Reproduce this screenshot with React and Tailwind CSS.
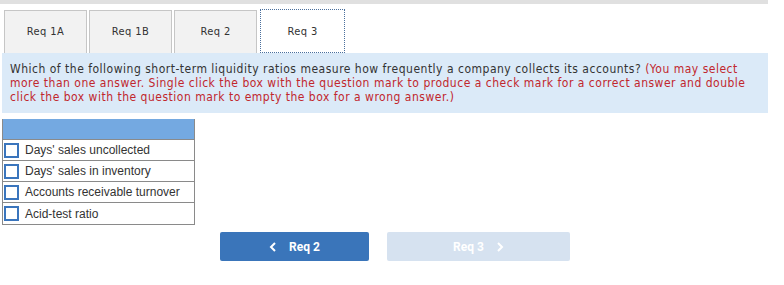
import React from "react";

const tabFont = {
  fontFamily: '"DejaVu Sans Condensed", "DejaVu Sans", Tahoma, sans-serif',
  letterSpacing: "0.4px",
};

const textFont = {
  fontFamily: '"DejaVu Sans Condensed", "DejaVu Sans", Tahoma, sans-serif',
  letterSpacing: "0.5px",
};

function Tab({ label, active }) {
  if (active) {
    return (
      <div
        className="w-[85px] h-[44px] bg-white border border-dotted border-[#4a6f9c] flex items-center justify-center pt-[2px] text-[11px] text-[#333]"
        style={tabFont}
      >
        {label}
      </div>
    );
  }
  return (
    <div
      className="w-[83px] h-[43px] bg-[#f2f2f2] border border-b-0 border-[#c6c6c6] flex items-center justify-center text-[11px] text-[#333]"
      style={tabFont}
    >
      {label}
    </div>
  );
}

const items = [
  "Days' sales uncollected",
  "Days' sales in inventory",
  "Accounts receivable turnover",
  "Acid-test ratio",
];

export default function App() {
  return (
    <div className="w-[784px] h-[285px] bg-white">
      <div className="h-[4px] w-[768px] bg-[#e0e0e0]" />
      <div className="flex items-end gap-[2px] pl-[4px] mt-[5px]">
        <Tab label="Req 1A" />
        <Tab label="Req 1B" />
        <Tab label="Req 2" />
        <div className="ml-[1px]">
          <Tab label="Req 3" active />
        </div>
      </div>
      <div
        className="ml-[2px] w-[766px] h-[60px] bg-[#dbeaf8] pl-[8px] pr-[20px] pt-[9px] text-[12px] leading-[14px] text-[#333]"
        style={textFont}
      >
        Which of the following short-term liquidity ratios measure how frequently a company collects its accounts?{" "}
        <span className="text-[#c1272d]">
          (You may select more than one answer. Single click the box with the question mark to produce a check mark for a correct answer and double click the box with the question mark to empty the box for a wrong answer.)
        </span>
      </div>
      <div className="ml-[2px] mt-[6px] w-[193px] border border-[#8a8a8a] border-t-0">
        <div className="h-[21px] bg-[#74a9e1] border-b border-[#8a8a8a]" />
        {items.map((t, i) => (
          <div
            key={i}
            className={`h-[21px] flex items-center ${i < items.length - 1 ? "border-b border-[#8a8a8a]" : ""}`}
          >
            <div className="ml-[1px] w-[15px] h-[15px] border-2 border-[#3a75bd] bg-white" />
            <span
              className="ml-[6px] text-[12px] text-[#333]"
              style={{ fontFamily: '"Liberation Sans", Arial, sans-serif' }}
            >
              {t}
            </span>
          </div>
        ))}
      </div>
      <div className="flex mt-[7px] ml-[220px] gap-[18px]" style={{ fontFamily: 'Roboto, "Liberation Sans", Arial, sans-serif' }}>
        <div className="w-[149px] h-[29px] bg-[#3a75ba] rounded-[2px] flex items-center justify-center text-white text-[12px] font-bold">
          <svg width="8" height="10" viewBox="0 0 8 10" className="mr-[12px]">
            <path d="M6 1 L2 5 L6 9" stroke="white" strokeWidth="2" fill="none" />
          </svg>
          Req 2
        </div>
        <div className="w-[183px] h-[29px] bg-[#d6e2f0] rounded-[2px] flex items-center justify-center text-white text-[12px] font-bold">
          Req 3
          <svg width="8" height="10" viewBox="0 0 8 10" className="ml-[12px]">
            <path d="M2 1 L6 5 L2 9" stroke="white" strokeWidth="2" fill="none" />
          </svg>
        </div>
      </div>
    </div>
  );
}
